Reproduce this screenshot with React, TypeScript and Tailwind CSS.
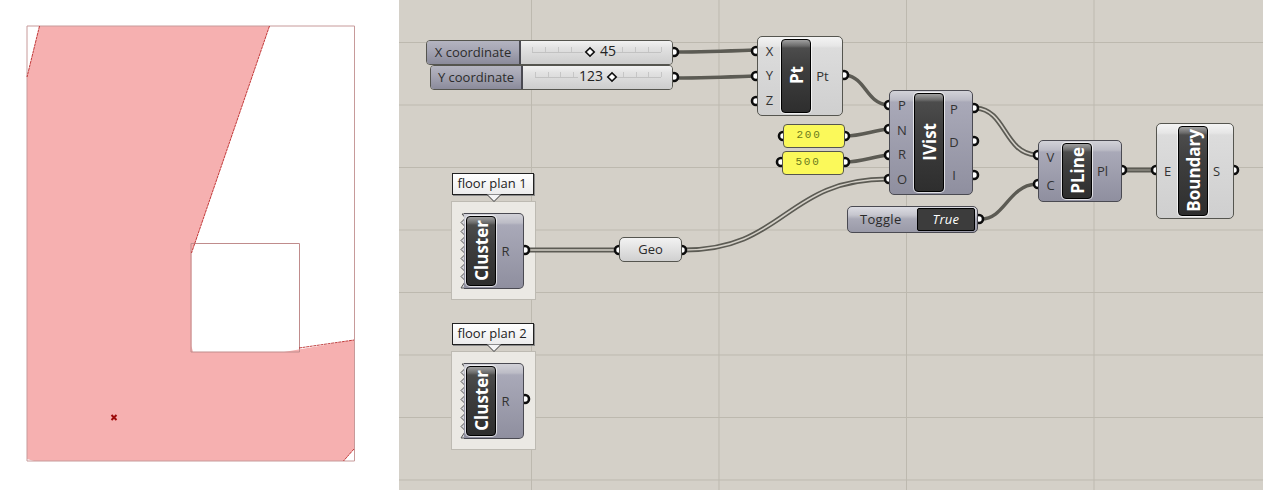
import React from "react";

const font = "font-['Open_Sans','Noto_Sans',sans-serif]";
const lightBody = "border border-[#55554f] bg-[linear-gradient(to_bottom,#f4f4f4_0px,#e6e6e6_9px,#dcdcdc_11px,#cfcfcf_100%)]";
const greyBody = "border border-[#4a4a52] bg-[linear-gradient(to_bottom,#d2d2d8_0px,#bcbcc6_9px,#a9a9b8_11px,#8f8f9f_100%)]";

function Capsule({ label, className = "" }: { label: string; className?: string }) {
  return (
    <div className={`flex w-[30px] shrink-0 items-center justify-center rounded-[4px] border border-black bg-[linear-gradient(to_bottom,#a0a0a0_0px,#6a6a6a_6px,#4c4c4c_8px,#3e3e3e_40%,#2e2e2e_100%)] pb-[2px] shadow-[0_0_0_1px_rgba(255,255,255,0.7)] ${className}`}>
      <span className="rotate-180 text-[17px] leading-none font-bold text-white [writing-mode:vertical-rl]">{label}</span>
    </div>
  );
}

function PortLabels({ items, className = "" }: { items: string[]; className?: string }) {
  return (
    <div className={`flex flex-col items-center justify-around text-[13px] leading-none text-[#333333] ${className}`}>
      {items.map((t) => (
        <span key={t}>{t}</span>
      ))}
    </div>
  );
}

function ComponentNode({ label, inputs, outputs, tone, className, leftCol }: { label: string; inputs: string[]; outputs: string[]; tone: string; className: string; leftCol: string }) {
  return (
    <div className={`absolute z-10 flex rounded-[5px] py-[2px] ${tone} ${className}`}>
      <PortLabels items={inputs} className={leftCol} />
      <Capsule label={label} />
      <PortLabels items={outputs} className="flex-1 pr-[8px]" />
    </div>
  );
}

function Slider({ label, value, className, labelW, knob, text, start, end, gapFrom, gapTo }: { label: string; value: string; className: string; labelW: string; knob: number; text: string; start: number; end: number; gapFrom: number; gapTo: number }) {
  const ticks = Array.from({ length: 11 }, (_, i) => start + (i * (end - start)) / 10).filter((x) => x < gapFrom || x > gapTo);
  return (
    <div className={`absolute z-10 flex h-[25px] overflow-hidden rounded-[4px] border border-[#55554f] ${className}`}>
      <div className={`flex items-center justify-center border-r-2 border-[#4a4a52] bg-[linear-gradient(to_bottom,#b4b4c0_0px,#a6a6b4_40%,#8b8b9b_100%)] text-[13px] text-[#2c2c2c] ${labelW}`}>{label}</div>
      <div className="relative flex-1 bg-[linear-gradient(to_bottom,#f2f2f2_0px,#e2e2e2_30%,#cdcdcd_100%)]">
        <svg className="absolute inset-0 h-full w-full" fill="none">
          <path d={`M${start} 11.5H${gapFrom}M${gapTo} 11.5H${end}`} stroke="#c2c2c2" />
          {ticks.map((x) => (
            <path key={x} d={`M${Math.round(x) + 0.5} 6V11`} stroke="#c6c6c6" />
          ))}
          <rect x={-3} y={-3} width={6} height={6} transform={`translate(${knob} 11) rotate(45)`} fill="#fff" stroke="#111" strokeWidth={1.6} />
        </svg>
        <span className={`absolute top-[1px] text-[14px] leading-[18px] text-[#222] ${text}`}>{value}</span>
      </div>
    </div>
  );
}

function YellowPanel({ value, className }: { value: string; className: string }) {
  return (
    <div className={`absolute z-10 flex h-[24px] w-[62px] items-center justify-center rounded-[4px] border border-[#55554f] bg-[#fbf95a] pr-[10px] pb-[1px] font-['Liberation_Mono',monospace] text-[11px] tracking-[1.8px] text-[#6a7a1c] ${className}`}>
      {value}
    </div>
  );
}

function ClusterGroup({ title, className }: { title: string; className: string }) {
  return (
    <div className={`absolute h-[99px] w-[85px] border border-[#bdbab2] bg-[#ebe9e4] ${className}`}>
      <div className="absolute top-[-29px] left-[0px] flex h-[22px] w-[82px] items-center justify-center border border-[#222] bg-[linear-gradient(to_bottom,#ffffff,#ececec)] pr-[2px] text-[13px] text-[#222] shadow-[1px_1px_0_#8a8a8a]">
        {title}
      </div>
      <svg className="absolute top-[-8px] left-[34px] h-[9px] w-[16px]" viewBox="0 0 16 9" fill="none">
        <path d="M1 0.5L8 7.5L15 0.5" fill="#f4f4f4" stroke="#333" />
      </svg>
      <svg className="absolute top-[11px] left-[7px] z-10 h-[76px] w-[10px]" viewBox="0 0 10 76">
        <path d="M8 1L3 1L6.5 5L2 9.5L6.5 14L2 18.5L6.5 23L2 27.5L6.5 32L2 36.5L6.5 41L2 45.5L6.5 50L2 54.5L6.5 59L2 63.5L6.5 68L2 75L8 75Z" fill="#d8d8de" stroke="#555" />
      </svg>
      <div className="absolute top-[11px] left-[12px] z-10 flex h-[76px] w-[60px] rounded-r-[5px] border border-l-0 border-[#4a4a52] bg-[linear-gradient(to_bottom,#d2d2d8_0px,#bcbcc6_9px,#a9a9b8_11px,#8f8f9f_100%)] py-[2px] pl-[2px]">
        <Capsule label="Cluster" />
        <PortLabels items={["R"]} className="flex-1 pr-[8px]" />
      </div>
    </div>
  );
}

const ports: [number, number][] = [
  [674, 52], [674, 77], [756, 51], [756, 76], [756, 101], [844, 75],
  [889, 105], [889, 129], [889, 155], [889, 179], [974, 108], [974, 141], [974, 175],
  [783, 136], [845, 136], [781, 162], [845, 162],
  [1038, 155], [1038, 184], [1122, 170], [1156, 170], [1234, 170],
  [979, 219], [619, 250], [682, 250], [525, 250], [525, 399],
];

const doubleWires = [
  "M526 250H618",
  "M684 250C785 250 785 179 888 179",
  "M976 108C1006 110 1004 153 1036 155",
];

export default function App() {
  return (
    <div className={`flex h-[490px] w-[1263px] overflow-hidden bg-white ${font}`}>
      <div className="h-full w-[399px] shrink-0 bg-white">
        <svg className="h-full w-full" viewBox="0 0 399 490" fill="none">
          <path d="M39.5 26H269.5L191.5 253V346L193 352H284L354 340V449L343.5 461H34L27 459V77Z" fill="#f6b0b0" />
          <path d="M27 26H354.5V461H27Z" stroke="#c79a9a" />
          <path d="M191 243.5H299.5V352H191Z" stroke="#c08c8c" />
          <path d="M269.5 26L191.5 253M39.5 26L27 77M299 348L354 340M354 449L343.5 461" stroke="#b31212" strokeWidth={0.8} strokeDasharray="3 0.6" />
          <path d="M111.5 415L116.5 420M116.5 415L111.5 420" stroke="#9c0a0a" strokeWidth={2} />
        </svg>
      </div>
      <div className="relative h-full flex-1 bg-[#d4d0c8] bg-[linear-gradient(to_right,#bdb9af_1px,transparent_1px),linear-gradient(to_bottom,#bdb9af_1px,transparent_1px)] bg-[position:132px_42px] bg-[size:187.5px_62.5px]">
        <ClusterGroup title="floor plan 1" className="top-[201px] left-[52px]" />
        <ClusterGroup title="floor plan 2" className="top-[351px] left-[52px]" />

        <svg className="absolute inset-0 z-[1] h-full w-full" viewBox="399 0 864 490" fill="none">
          <g stroke="#5c5b54" strokeWidth={3.4}>
            <path d="M676 52C700 52 730 51 755 50" />
            <path d="M676 78C700 78 730 77 755 76" />
            <path d="M846 75C866 78 866 103 888 105" />
            <path d="M846 136C860 136 872 131 888 129" />
            <path d="M846 162C860 162 872 157 888 155" />
            <path d="M981 219C1005 219 1008 186 1036 184" />
          </g>
          <g stroke="#5c5b54" strokeWidth={5}>
            {doubleWires.map((d) => (
              <path key={d} d={d} />
            ))}
            <path d="M1124 170H1154" />
          </g>
          <g stroke="#d4d0c8" strokeWidth={1.6}>
            {doubleWires.map((d) => (
              <path key={d} d={d} />
            ))}
            <path d="M1124 170H1154" stroke="#8a887f" />
          </g>
          {ports.map(([x, y]) => (
            <circle key={`${x}-${y}`} cx={x} cy={y} r={4} fill="#fff" stroke="#0c0c0c" strokeWidth={2.6} />
          ))}
        </svg>

        <Slider label="X coordinate" value="45" className="top-[40px] left-[27px] w-[247px]" labelW="w-[94px]" knob={69} text="left-[79px]" start={11} end={140} gapFrom={62} gapTo={94} />
        <Slider label="Y coordinate" value="123" className="top-[65px] left-[31px] w-[243px]" labelW="w-[92px]" knob={89} text="left-[56px]" start={12} end={138} gapFrom={55} gapTo={94} />

        <ComponentNode label="Pt" inputs={["X", "Y", "Z"]} outputs={["Pt"]} tone={lightBody} leftCol="w-[23px]" className="top-[36px] left-[358px] h-[80px] w-[86px]" />
        <ComponentNode label="IVist" inputs={["P", "N", "R", "O"]} outputs={["P", "D", "I"]} tone={greyBody} leftCol="w-[24px]" className="top-[90px] left-[490px] h-[105px] w-[84px]" />
        <ComponentNode label="PLine" inputs={["V", "C"]} outputs={["Pl"]} tone={greyBody} leftCol="w-[23px]" className="top-[140px] left-[639px] h-[62px] w-[84px]" />
        <ComponentNode label="Boundary" inputs={["E"]} outputs={["S"]} tone={lightBody} leftCol="w-[21px]" className="top-[123px] left-[757px] h-[96px] w-[78px]" />

        <YellowPanel value="200" className="top-[124px] left-[384px]" />
        <YellowPanel value="500" className="top-[151px] left-[383px]" />

        <div className="absolute top-[206px] left-[448px] z-10 flex h-[27px] w-[131px] items-center rounded-[5px] border border-[#4a4a52] bg-[linear-gradient(to_bottom,#dcdce2_0px,#c6c6ce_8px,#a9a9b6_12px,#9a9aa8_100%)] pr-[2px] pl-[12px] text-[13px] tracking-[0.3px] text-[#2a2a2a]">
          <span className="flex-1">Toggle</span>
          <div className="flex h-[23px] w-[58px] items-center justify-center rounded-[2px] border border-black bg-[#3c3c3c] text-[13px] text-white italic">True</div>
        </div>

        <div className="absolute top-[237px] left-[220px] z-10 flex h-[25px] w-[63px] items-center justify-center rounded-[5px] border border-[#55554f] bg-[linear-gradient(to_bottom,#f2f2f2,#d0d0d0)] text-[13px] text-[#2a2a2a]">Geo</div>
      </div>
    </div>
  );
}
